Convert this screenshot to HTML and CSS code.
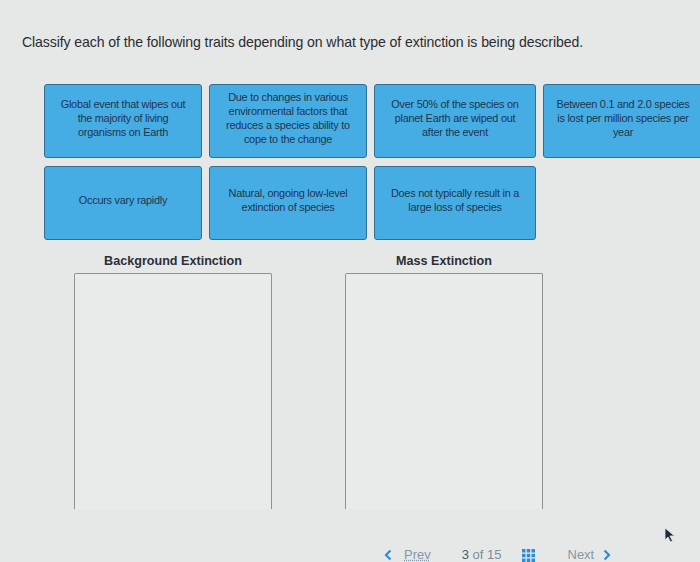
FILE: index.html
```html
<!DOCTYPE html>
<html>
<head>
<meta charset="utf-8">
<link rel="stylesheet" href="styles.css">
</head>
<body>
<div class="page">
  <p class="title">Classify each of the following traits depending on what type of extinction is being described.</p>
  <div class="cards">
    <div class="card">Global event that wipes out the majority of living organisms on Earth</div>
    <div class="card">Due to changes in various environmental factors that reduces a species ability to cope to the change</div>
    <div class="card">Over 50% of the species on planet Earth are wiped out after the event</div>
    <div class="card">Between 0.1 and 2.0 species is lost per million species per year</div>
    <div class="card">Occurs vary rapidly</div>
    <div class="card">Natural, ongoing low-level extinction of species</div>
    <div class="card">Does not typically result in a large loss of species</div>
  </div>
  <div class="zones">
    <div class="zone">
      <div class="zone-label">Background Extinction</div>
      <div class="zone-box"></div>
    </div>
    <div class="zone">
      <div class="zone-label">Mass Extinction</div>
      <div class="zone-box"></div>
    </div>
  </div>
  <div class="nav">
    <svg class="chev" width="8" height="12" viewBox="0 0 8 12"><path d="M6.5 1.5 L2 6 L6.5 10.5" fill="none" stroke="#2c8fd6" stroke-width="2.2"/></svg>
    <span class="prev">Prev</span>
    <span class="count"><b>3</b> of 15</span>
    <svg class="grid" width="13" height="13" viewBox="0 0 13 13">
      <rect x="0" y="0" width="3.5" height="3.5" fill="#2c8fd6"/>
      <rect x="4.75" y="0" width="3.5" height="3.5" fill="#2c8fd6"/>
      <rect x="9.5" y="0" width="3.5" height="3.5" fill="#2c8fd6"/>
      <rect x="0" y="4.75" width="3.5" height="3.5" fill="#2c8fd6"/>
      <rect x="4.75" y="4.75" width="3.5" height="3.5" fill="#2c8fd6"/>
      <rect x="9.5" y="4.75" width="3.5" height="3.5" fill="#2c8fd6"/>
      <rect x="0" y="9.5" width="3.5" height="3.5" fill="#2c8fd6"/>
      <rect x="4.75" y="9.5" width="3.5" height="3.5" fill="#2c8fd6"/>
      <rect x="9.5" y="9.5" width="3.5" height="3.5" fill="#2c8fd6"/>
    </svg>
    <span class="next">Next</span>
    <svg class="chev" width="8" height="12" viewBox="0 0 8 12"><path d="M1.5 1.5 L6 6 L1.5 10.5" fill="none" stroke="#2c8fd6" stroke-width="2.2"/></svg>
  </div>
  <svg class="cursor" width="12" height="16" viewBox="0 0 12 16">
    <path d="M1 1 L1 13 L4 10 L6.5 15 L8.5 14 L6 9 L10.5 9 Z" fill="#1f2a3a" stroke="#dfe3ea" stroke-width="0.8"/>
  </svg>
</div>
</body>
</html>
```
FILE: styles.css
```css
html, body {
  margin: 0;
  padding: 0;
}
body {
  background: #e6e8e7;
  font-family: "Liberation Sans", Arial, sans-serif;
  width: 700px;
  height: 562px;
  overflow: hidden;
}
.page {
  position: relative;
  padding: 34px 0 0 22px;
  height: 528px;
}
.title {
  margin: 0;
  font-size: 14.1px;
  line-height: 16px;
  color: #2a2c30;
  letter-spacing: -0.1px;
  white-space: nowrap;
}
.cards {
  margin: 34px 0 0 22px;
  display: grid;
  grid-template-columns: 158px 158px 162px 160px;
  grid-auto-rows: 74px;
  gap: 8px 7px;
}
.card {
  box-sizing: border-box;
  background: #46ade4;
  border: 1.5px solid #2f6f96;
  border-radius: 3px;
  color: #1d3550;
  font-size: 10.9px;
  line-height: 14px;
  letter-spacing: -0.25px;
  text-align: center;
  padding: 6px 10px 12px;
  display: flex;
  align-items: center;
  justify-content: center;
}
.zones {
  margin: 14px 0 0 52px;
  display: flex;
  gap: 73px;
}
.zone {
  width: 198px;
}
.zone-label {
  text-align: center;
  font-weight: bold;
  font-size: 12.6px;
  line-height: 15px;
  color: #2c2f36;
  height: 15px;
  margin-bottom: 4px;
}
.zone-box {
  box-sizing: border-box;
  height: 236px;
  border: 1px solid #8e9296;
  border-bottom: none;
  border-radius: 2px 2px 0 0;
  background: #e9ebea;
}
.nav {
  margin: 37px 0 0 362px;
  display: flex;
  align-items: center;
  font-size: 13px;
  line-height: 16px;
  color: #8696a4;
  height: 18px;
}
.chev {
  display: block;
}
.prev {
  margin-left: 12px;
  text-decoration: underline;
  text-decoration-style: dotted;
}
.count {
  margin-left: 31px;
  color: #7d8d9b;
}
.count b {
  color: #4b5c6c;
  font-weight: normal;
}
.grid {
  margin-left: 20px;
}
.next {
  margin-left: 33px;
  margin-right: 9px;
}
.cursor {
  position: absolute;
  left: 664px;
  top: 527px;
}
```
